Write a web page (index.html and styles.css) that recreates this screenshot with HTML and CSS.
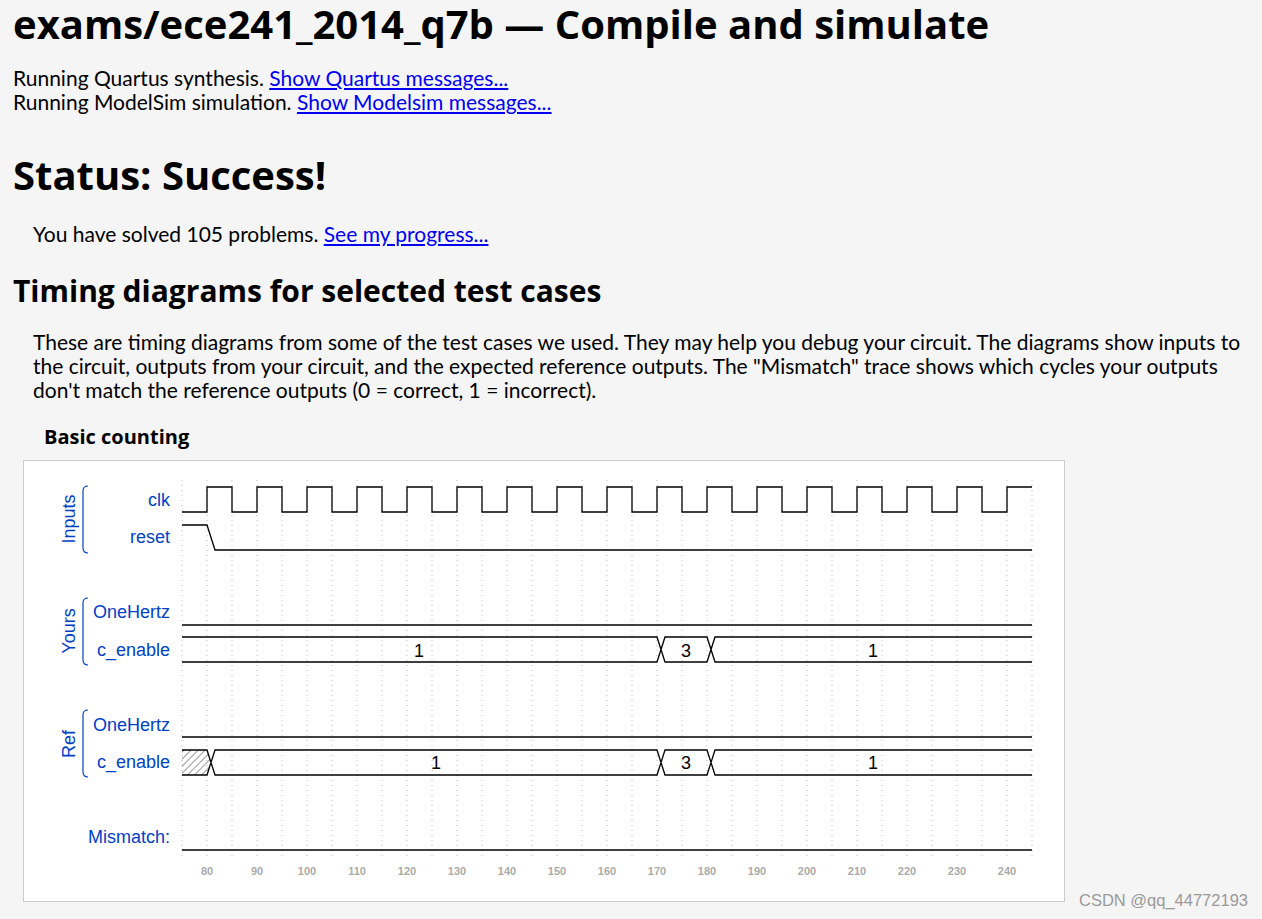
FILE: index.html
```html
<!DOCTYPE html>
<html lang="en">
<head>
<meta charset="utf-8">
<title>exams/ece241_2014_q7b — Compile and simulate</title>
<link rel="stylesheet" href="styles.css">
</head>
<body>
<h1 class="title">exams/ece241_2014_q7b — Compile and simulate</h1>
<p class="log">Running Quartus synthesis. <a href="#">Show Quartus messages...</a><br>
Running ModelSim simulation. <a href="#">Show Modelsim messages...</a></p>

<h1 class="status">Status: Success!</h1>
<p class="indent solved">You have solved 105 problems. <a href="#">See my progress...</a></p>

<h2 class="section">Timing diagrams for selected test cases</h2>
<p class="indent desc">These are timing diagrams from some of the test cases we used. They may help you debug your circuit. The diagrams show inputs to the circuit, outputs from your circuit, and the expected reference outputs. The "Mismatch" trace shows which cycles your outputs don't match the reference outputs (0 = correct, 1 = incorrect).</p>

<div class="case">
  <h3 class="case-title">Basic counting</h3>
  <div class="wave-box">
    <svg class="wave" width="1040" height="440" viewBox="24 461 1040 440" xmlns="http://www.w3.org/2000/svg">
      <defs>
        <pattern id="hatch" width="5" height="5" patternUnits="userSpaceOnUse" patternTransform="rotate(45)">
          <line x1="0" y1="0" x2="0" y2="5" stroke="#000" stroke-width="0.8"/>
        </pattern>
      </defs>
      <g class="grid" stroke="#bbb" stroke-width="1" stroke-dasharray="1 4">
        <path d="M182 480V858M207 480V858M232 480V858M257 480V858M282 480V858M307 480V858M332 480V858M357 480V858M382 480V858M407 480V858M432 480V858M457 480V858M482 480V858M507 480V858M532 480V858M557 480V858M582 480V858M607 480V858M632 480V858M657 480V858M682 480V858M707 480V858M732 480V858M757 480V858M782 480V858M807 480V858M832 480V858M857 480V858M882 480V858M907 480V858M932 480V858M957 480V858M982 480V858M1007 480V858M1032 480V858"/>
      </g>

      <g class="labels" fill="#0041c4" font-family="'Liberation Sans', Arial, sans-serif" font-size="18" text-anchor="end">
        <text x="170" y="506">clk</text>
        <text x="170" y="543">reset</text>
        <text x="170" y="618">OneHertz</text>
        <text x="170" y="656">c_enable</text>
        <text x="170" y="731">OneHertz</text>
        <text x="170" y="768">c_enable</text>
        <text x="170" y="843">Mismatch:</text>
      </g>

      <g class="groups" fill="none" stroke="#0041c4" stroke-width="1.2">
        <path d="M88 486q-5 0-5 5V548q0 5 5 5"/>
        <path d="M88 598q-5 0-5 5V660q0 5 5 5"/>
        <path d="M88 710q-5 0-5 5V772q0 5 5 5"/>
      </g>
      <g class="group-labels" fill="#0041c4" font-family="'Liberation Sans', Arial, sans-serif" font-size="18" text-anchor="middle">
        <text transform="translate(75 519) rotate(-90)">Inputs</text>
        <text transform="translate(75 631) rotate(-90)">Yours</text>
        <text transform="translate(75 744) rotate(-90)">Ref</text>
      </g>

      <g class="signals" fill="none" stroke="#000" stroke-width="1.3">
        <path d="M182 512H207V487H232V512H257V487H282V512H307V487H332V512H357V487H382V512H407V487H432V512H457V487H482V512H507V487H532V512H557V487H582V512H607V487H632V512H657V487H682V512H707V487H732V512H757V487H782V512H807V487H832V512H857V487H882V512H907V487H932V512H957V487H982V512H1007V487H1032"/>
        <path d="M182 525H207L215 550H1032"/>

        <path d="M182 625H1032"/>
        <path d="M182 637H657L665 662H707L715 637H1032M182 662H657L665 637H707L715 662H1032"/>

        <path d="M182 737H1032"/>
        <polygon points="182,750 207,750 211,762.5 207,775 182,775" fill="url(#hatch)" stroke="none"/>
        <path d="M182 750H207L215 775H657L665 750H707L715 775H1032M182 775H207L215 750H657L665 775H707L715 750H1032"/>

        <path d="M182 850H1032"/>
      </g>

      <g class="values" fill="#000" font-family="'Liberation Sans', Arial, sans-serif" font-size="18" text-anchor="middle">
        <text x="419" y="656.5">1</text>
        <text x="686" y="656.5">3</text>
        <text x="873" y="656.5">1</text>
        <text x="436" y="769">1</text>
        <text x="686" y="769">3</text>
        <text x="873" y="769">1</text>
      </g>

      <g class="axis" fill="#aaa" font-family="'Liberation Sans', Arial, sans-serif" font-size="11" font-weight="bold" text-anchor="middle">
        <text x="207" y="875">80</text>
        <text x="257" y="875">90</text>
        <text x="307" y="875">100</text>
        <text x="357" y="875">110</text>
        <text x="407" y="875">120</text>
        <text x="457" y="875">130</text>
        <text x="507" y="875">140</text>
        <text x="557" y="875">150</text>
        <text x="607" y="875">160</text>
        <text x="657" y="875">170</text>
        <text x="707" y="875">180</text>
        <text x="757" y="875">190</text>
        <text x="807" y="875">200</text>
        <text x="857" y="875">210</text>
        <text x="907" y="875">220</text>
        <text x="957" y="875">230</text>
        <text x="1007" y="875">240</text>
      </g>
    </svg>
  </div>
</div>

<div class="watermark">CSDN @qq_44772193</div>
</body>
</html>
```

FILE: styles.css
```css
html, body {
  margin: 0;
  padding: 0;
}

body {
  background: #f5f5f5;
  color: #000;
  font-family: Lato, "Open Sans", sans-serif;
  font-size: 21px;
  line-height: 24px;
  padding: 0 13px;
}

a {
  color: #0000ee;
  text-decoration: underline;
}

h1, h2, h3 {
  font-family: "Open Sans", "Noto Sans", sans-serif;
  font-weight: 700;
  margin: 0;
}

.title {
  font-size: 40px;
  line-height: 48px;
}

.log {
  margin: 18px 0 0;
}

.status {
  font-size: 40px;
  line-height: 48px;
  margin-top: 37px;
}

.indent {
  padding-left: 20px;
}

.solved {
  margin: 23px 0 0;
}

.section {
  font-size: 30px;
  line-height: 40px;
  margin-top: 25px;
}

.desc {
  margin: 19px 0 0;
}

.case {
  margin-left: 10px;
  margin-top: 21px;
}

.case-title {
  font-size: 20px;
  line-height: 28px;
  padding-left: 21px;
}

.wave-box {
  margin-top: 9px;
  width: 1040px;
  height: 440px;
  background: #fff;
  border: 1px solid #ccc;
}

.wave {
  display: block;
}

.watermark {
  position: absolute;
  top: 890px;
  right: 14px;
  font-family: "Liberation Sans", Arial, sans-serif;
  font-size: 16.5px;
  line-height: 20px;
  color: #9a9a9a;
}
```
